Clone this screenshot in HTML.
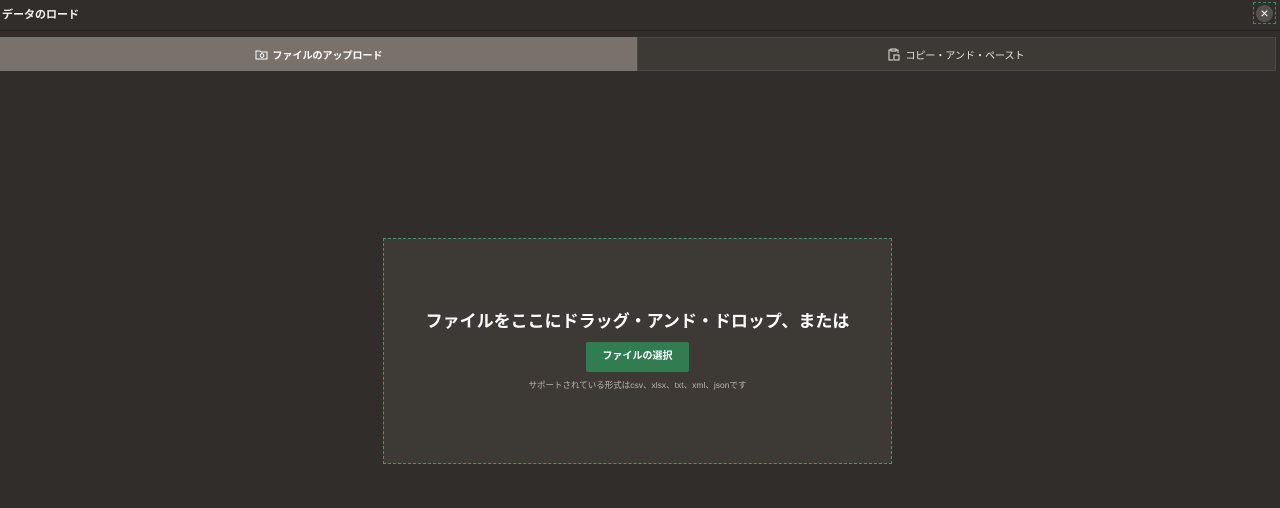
<!DOCTYPE html>
<html><head><meta charset="utf-8"><style>
*{margin:0;padding:0;box-sizing:border-box}
body{width:1280px;height:508px;background:#312d2a;font-family:"Liberation Sans","Noto Sans CJK JP",sans-serif;color:#fff;position:relative;overflow:hidden}
.title{position:absolute;left:2px;top:6px;font-size:11px;font-weight:bold;color:#f0eeec}
.hr{position:absolute;left:0;top:30px;width:1280px;height:1px;background:#26231f}
.close{position:absolute;left:1253px;top:2px;width:23px;height:22px;border:1px dashed #3f8a5a;display:flex;align-items:center;justify-content:center}
.close div{width:17px;height:17px;border-radius:50%;background:#55504b;color:#fff;font-size:14px;line-height:16px;text-align:center}
.tabs{position:absolute;left:0;top:37px;width:1276px;height:34px;display:flex}
.tab{flex:1;display:flex;align-items:center;justify-content:center;font-size:10px;gap:5px}
.t1{background:#7a716b;font-weight:bold;color:#fff}
.t2{background:#3d3935;border:1px solid #4c4843;color:#e6e2de}
.drop{position:absolute;left:383px;top:238px;width:509px;height:226px;background:#3d3935;border:1px dashed #3f9a62;text-align:center}
.h{margin-top:72px;font-size:17px;line-height:22px;font-weight:bold;color:#fff}
.btn{display:inline-block;margin-top:9px;width:103px;height:30px;background:#2f7d51;border-radius:2px;font-size:10px;font-weight:bold;line-height:30px;color:#fff}
.s{margin-top:7px;font-size:8.5px;color:#b8b2ac}
</style></head><body>
<div class="title">データのロード</div>
<div class="hr"></div>
<div class="close"><div>×</div></div>
<div class="tabs">
<div class="tab t1"><svg width="13" height="11" viewBox="0 0 13 11"><path d="M1 2h4l1 1h6v7H1z" fill="none" stroke="#fff" stroke-width="1"/><circle cx="7" cy="6.5" r="1.8" fill="none" stroke="#fff"/></svg>ファイルのアップロード</div>
<div class="tab t2"><svg width="12" height="13" viewBox="0 0 12 13"><path d="M3 2H1v10h4M8 2h2v3M3 1h5v2H3z" fill="none" stroke="#e6e2de"/><rect x="6" y="7" width="5" height="5" fill="none" stroke="#e6e2de"/></svg>コピー・アンド・ペースト</div>
</div>
<div class="drop">
<div class="h">ファイルをここにドラッグ・アンド・ドロップ、または</div>
<div class="btn">ファイルの選択</div>
<div class="s">サポートされている形式はcsv、xlsx、txt、xml、jsonです</div>
</div>
</body></html>
